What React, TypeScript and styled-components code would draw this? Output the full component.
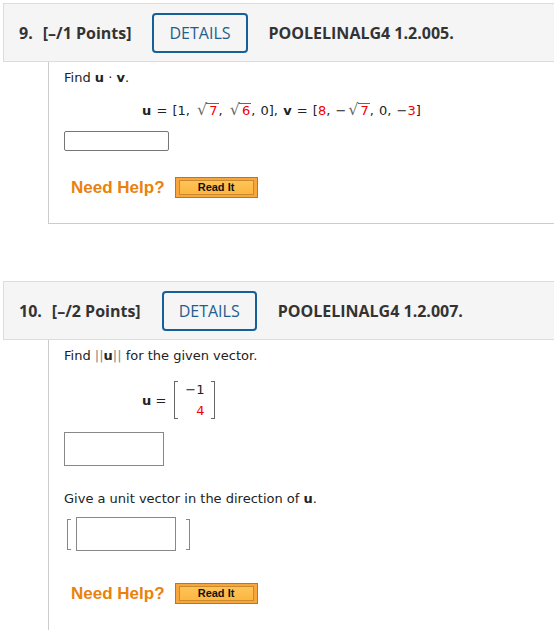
import React from "react";
import styled, { createGlobalStyle } from "styled-components";

interface HeaderProps {
  number: number;
  points: number;
  code: string;
}

const GlobalStyle = createGlobalStyle`
  html, body {
    margin: 0;
    padding: 0;
    background: #fff;
    overflow: hidden;
  }
  body {
    font-family: "DejaVu Sans", Verdana, sans-serif;
    color: #222;
  }
`;

const QuestionHeader = ({ number, points, code }: HeaderProps) => (
  <Header>
    <Num>{number}.</Num>
    <Points>[–/{points} Points]</Points>
    <DetailsButton>DETAILS</DetailsButton>
    <Code>{code}</Code>
  </Header>
);

const Sqrt = ({ children }: { children: React.ReactNode }) => (
  <>
    <Radical>√</Radical>
    <Radicand>{children}</Radicand>
  </>
);

const HelpRow = ({ top }: { top: number }) => (
  <Help $mt={top}>
    <NeedHelp>Need Help?</NeedHelp>
    <ReadIt>
      <ReadItInner>Read It</ReadItInner>
    </ReadIt>
  </Help>
);

const App = () => {
  return (
    <Page>
      <GlobalStyle />
      <Question>
        <QuestionHeader number={9} points={1} code="POOLELINALG4 1.2.005." />
        <Body $closed>
          <Line>
            Find <b>u</b> · <b>v</b>.
          </Line>
          <MathLine>
            <b>u</b> = [1, <Sqrt><Red>7</Red></Sqrt>, <Sqrt><Red>6</Red></Sqrt>, 0],{" "}
            <b>v</b> = [<Red>8</Red>, −<Sqrt><Red>7</Red></Sqrt>, 0, −<Red>3</Red>]
          </MathLine>
          <AnswerBox $w={105} $h={20} $mt={13} $round />
          <HelpRow top={26} />
        </Body>
      </Question>

      <Question $spaced>
        <QuestionHeader number={10} points={2} code="POOLELINALG4 1.2.007." />
        <Body>
          <Line>
            Find <Bars>||</Bars>
            <b>u</b>
            <Bars>||</Bars> for the given vector.
          </Line>
          <MatrixRow>
            <span>
              <b>u</b> =
            </span>
            <Matrix>
              <Bracket />
              <Column>
                <Cell>−1</Cell>
                <Cell>
                  <Red>4</Red>
                </Cell>
              </Column>
              <Bracket $right />
            </Matrix>
          </MatrixRow>
          <AnswerBox $w={100} $h={34} $mt={13} />
          <Line $mt={25}>
            Give a unit vector in the direction of <b>u</b>.
          </Line>
          <VectorAnswer>
            <SmallBracket />
            <AnswerBox $w={100} $h={34} $mt={0} />
            <SmallBracket $right />
          </VectorAnswer>
          <HelpRow top={32} />
        </Body>
      </Question>
    </Page>
  );
};

const Page = styled.div`
  padding: 3px 0 0 3px;
`;
const Question = styled.section<{ $spaced?: boolean }>`
  margin-top: ${(p) => (p.$spaced ? "57px" : "0")};
`;
const Header = styled.div`
  display: flex;
  align-items: center;
  margin-right: -20px;
  padding: 9px 15px 8px;
  background: #f5f5f5;
  border: 1px solid #dcdcdc;
  font-family: "Open Sans", sans-serif;
  font-size: 16px;
  color: #333;
`;
const Num = styled.span`
  font-weight: 700;
  margin-right: 10px;
`;
const Points = styled.span`
  font-weight: 700;
  margin-right: 21px;
`;
const DetailsButton = styled.button`
  box-sizing: border-box;
  height: 40px;
  padding: 0 15px;
  margin-right: 21px;
  background: transparent;
  border: 2px solid #16609a;
  border-radius: 4px;
  font-family: "Open Sans", sans-serif;
  font-size: 16px;
  color: #245e8e;
`;
const Code = styled.span`
  font-weight: 700;
`;
const Body = styled.div<{ $closed?: boolean }>`
  margin: 0 -20px 0 45px;
  padding: 8px 0 ${(p) => (p.$closed ? "25px" : "40px")} 15px;
  border-left: 1px solid #ccc;
  border-bottom: ${(p) => (p.$closed ? "1px solid #ccc" : "none")};
  font-size: 13px;
  line-height: 15px;
`;
const Line = styled.div<{ $mt?: number }>`
  margin-top: ${(p) => p.$mt ?? 0}px;
`;
const MathLine = styled.div`
  margin: 17px 0 0 78px;
  white-space: nowrap;
  word-spacing: 1px;
`;
const Red = styled.span`
  color: #e00;
`;
const Radical = styled.span`
  color: #666;
  font-size: 16px;
  margin-left: 2px;
`;
const Radicand = styled.span`
  display: inline-block;
  line-height: 13px;
  border-top: 1px solid #666;
  padding: 0 1px 0 3px;
  margin-left: -1px;
`;
const Bars = styled.span`
  color: #888;
`;
const MatrixRow = styled.div`
  display: flex;
  align-items: center;
  gap: 8px;
  margin: 18px 0 0 78px;
`;
const Matrix = styled.div`
  display: flex;
  align-items: stretch;
`;
const Bracket = styled.span<{ $right?: boolean }>`
  width: 3px;
  border: 1px solid #666;
  ${(p) => (p.$right ? "border-left: none;" : "border-right: none;")}
`;
const Column = styled.div`
  display: flex;
  flex-direction: column;
  align-items: flex-end;
  gap: 4px;
  padding: 0 7px;
  line-height: 17px;
`;
const Cell = styled.span``;
const AnswerBox = styled.div<{ $w: number; $h: number; $mt: number; $round?: boolean }>`
  box-sizing: border-box;
  width: ${(p) => p.$w}px;
  height: ${(p) => p.$h}px;
  margin-top: ${(p) => p.$mt}px;
  border: 1px solid ${(p) => (p.$round ? "#767676" : "#888")};
  border-radius: ${(p) => (p.$round ? "2px" : "0")};
  background: #fff;
`;
const VectorAnswer = styled.div`
  display: flex;
  align-items: center;
  margin: 11px 0 0 3px;
  gap: 5px;
`;
const SmallBracket = styled.span<{ $right?: boolean }>`
  box-sizing: border-box;
  width: 4px;
  height: 31px;
  border: 1px solid #888;
  ${(p) => (p.$right ? "border-left: none; margin-left: 5px;" : "border-right: none;")}
`;
const Help = styled.div<{ $mt: number }>`
  display: flex;
  align-items: center;
  gap: 10px;
  margin: ${(p) => p.$mt}px 0 0 7px;
`;
const NeedHelp = styled.span`
  font-family: "Liberation Sans", Arial, sans-serif;
  font-weight: bold;
  font-size: 17px;
  color: #e9820c;
`;
const ReadIt = styled.button`
  box-sizing: border-box;
  width: 83px;
  height: 21px;
  padding: 2px 3px;
  border: 1px solid #b9742f;
  background: #f8a53c;
  display: flex;
`;
const ReadItInner = styled.span`
  flex: 1;
  border: 1px solid #c98a2e;
  background: linear-gradient(#fec457, #fdb640);
  font-family: "Liberation Sans", Arial, sans-serif;
  font-weight: bold;
  font-size: 11px;
  line-height: 13px;
  color: #111;
  text-align: center;
`;

export default App;
